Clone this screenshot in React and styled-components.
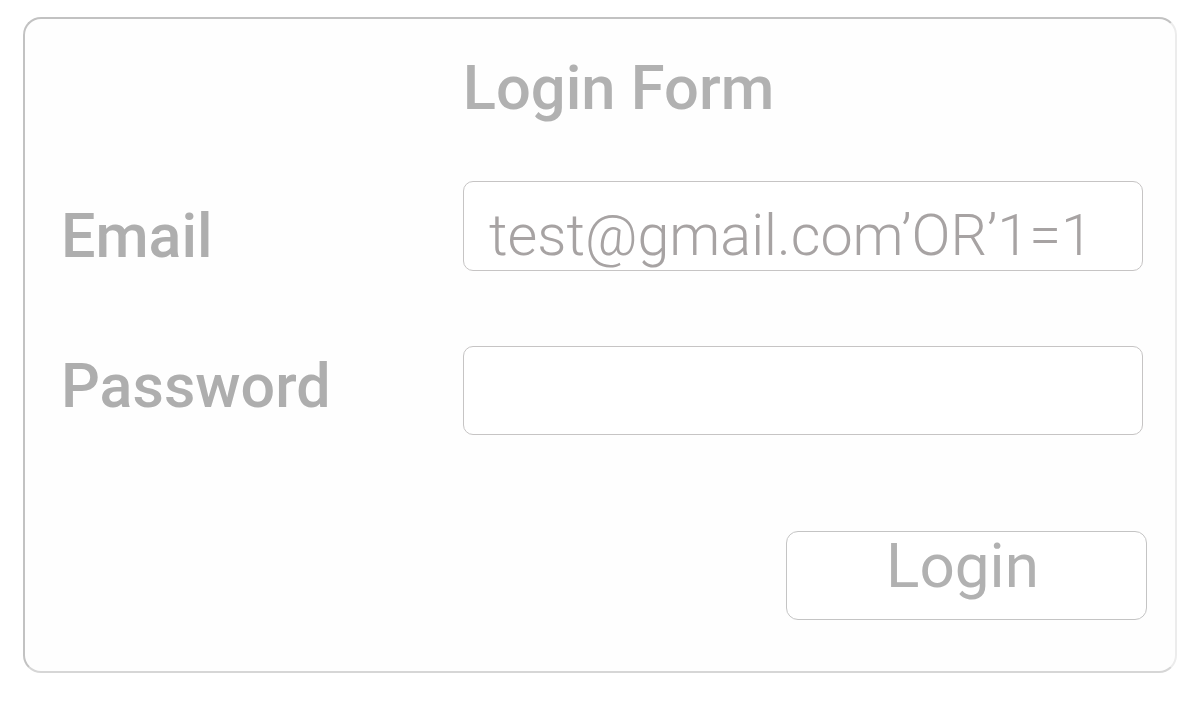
import React from "react";
import styled, { createGlobalStyle } from "styled-components";

const Global = createGlobalStyle`
  html, body { margin: 0; padding: 0; background: #ffffff; }
  body { font-family: Roboto, "Liberation Sans", sans-serif; }
  * { box-sizing: border-box; }
`;

const Page = styled.div`
  width: 1200px;
  height: 701px;
  padding: 17px 23px 28px 23px;
`;

const Card = styled.form`
  width: 100%;
  height: 100%;
  border-radius: 18px;
  border: 2px solid #c2c2c2;
  border-right-color: #ececec;
  border-bottom-color: #d6d6d6;
  background: #fefefe;
  display: flex;
  flex-direction: column;
  padding: 0 30px 0 36px;
`;

const Title = styled.h1`
  margin: 0;
  padding: 34px 0 0 31px;
  text-align: center;
  font-family: Roboto, sans-serif;
  font-weight: 500;
  font-size: 61.5px;
  line-height: 70px;
  color: #b1b1b1;
`;

const Row = styled.div`
  display: grid;
  grid-template-columns: 402px 1fr;
  align-items: start;
  margin-top: ${(p) => p.$gap}px;
`;

const Label = styled.label`
  font-family: Roboto, sans-serif;
  font-weight: 500;
  font-size: 61px;
  line-height: normal;
  color: #aeaeae;
  margin-top: ${(p) => p.$offset}px;
`;

const Field = styled.input`
  width: 680px;
  height: ${(p) => p.$h}px;
  border: 1px solid #c6c4c4;
  border-radius: 10px;
  background: #ffffff;
  padding: 18px 0 0 25px;
  font-family: Roboto, sans-serif;
  font-weight: 300;
  font-size: 57.5px;
  color: #a7a3a3;
  outline: none;
`;

const Actions = styled.div`
  display: flex;
  justify-content: flex-end;
  margin-top: 96px;
  margin-right: -2px;
`;

const Button = styled.button`
  width: 361px;
  height: 89px;
  border: 1px solid #c4c4c4;
  border-radius: 12px;
  background: #ffffff;
  font-family: Roboto, sans-serif;
  font-weight: 400;
  font-size: 62px;
  color: #b1b1b1;
  padding: 0 8px 19px 0;
  line-height: 1;
`;

export default function App() {
  return (
    <Page>
      <Global />
      <Card onSubmit={(e) => e.preventDefault()}>
        <Title>Login Form</Title>
        <Row $gap={58}>
          <Label $offset={19}>Email</Label>
          <Field $h={90} defaultValue="test@gmail.com’OR’1=1" />
        </Row>
        <Row $gap={74}>
          <Label $offset={4}>Password</Label>
          <Field $h={89} type="password" />
        </Row>
        <Actions>
          <Button type="submit">Login</Button>
        </Actions>
      </Card>
    </Page>
  );
}
